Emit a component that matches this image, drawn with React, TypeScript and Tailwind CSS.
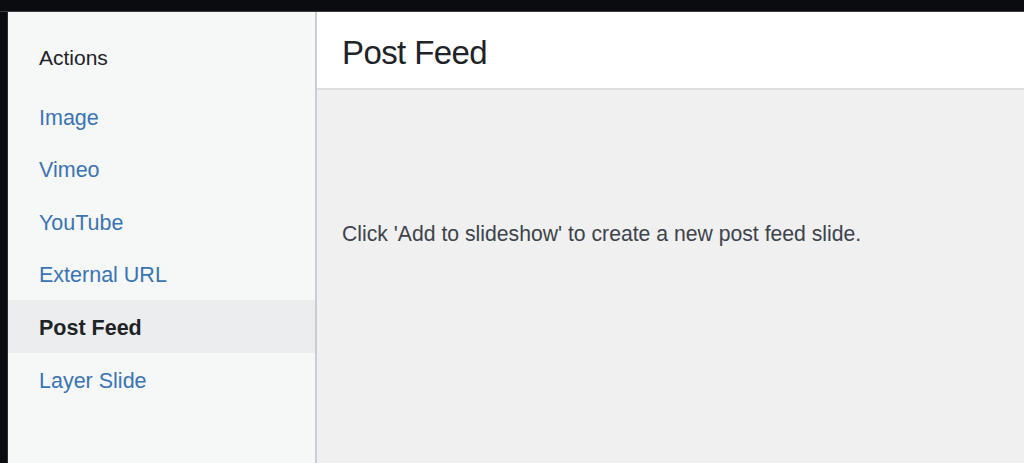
import React from "react";

const items = [
  { label: "Image", active: false },
  { label: "Vimeo", active: false },
  { label: "YouTube", active: false },
  { label: "External URL", active: false },
  { label: "Post Feed", active: true },
  { label: "Layer Slide", active: false },
];

export default function App() {
  return (
    <div
      className="w-[1024px] h-[463px] bg-[#0b0c0f] flex flex-col overflow-hidden"
      style={{ fontFamily: '"Liberation Sans", Arial, sans-serif' }}
    >
      <div className="h-[12px] shrink-0 border-b border-[#3a3b3e]" />
      <div className="flex flex-1 min-h-0">
        <div className="w-[8px] shrink-0 border-r border-[#2c2d30]" />
        <div className="w-[309px] shrink-0 bg-[#f6f7f7] border-r-2 border-[#c9ced3] flex flex-col">
          <div className="h-[78px] pl-[31px] pt-[14px] flex items-center text-[21px] text-[#1d2327]">
            Actions
          </div>
          {items.map((it) => (
            <div
              key={it.label}
              className={
                it.active
                  ? "h-[53px] pl-[31px] pt-[3px] flex items-center text-[21.5px] font-bold text-[#1d2327] bg-[#ecedee]"
                  : "h-[52.5px] pl-[31px] pt-[3px] flex items-center text-[21.5px] text-[#3a74b3]"
              }
            >
              {it.label}
            </div>
          ))}
        </div>
        <div className="flex-1 flex flex-col bg-[#f0f0f1]">
          <div className="h-[78px] shrink-0 bg-white border-b-2 border-[#dcdee0] flex items-center pl-[25px]">
            <h1 className="text-[33px] text-[#1d2327] tracking-[-0.6px] mt-[5px]">
              Post Feed
            </h1>
          </div>
          <div className="pl-[25px] pt-[128px] text-[21.2px] text-[#3c434a]">
            Click 'Add to slideshow' to create a new post feed slide.
          </div>
        </div>
      </div>
    </div>
  );
}
